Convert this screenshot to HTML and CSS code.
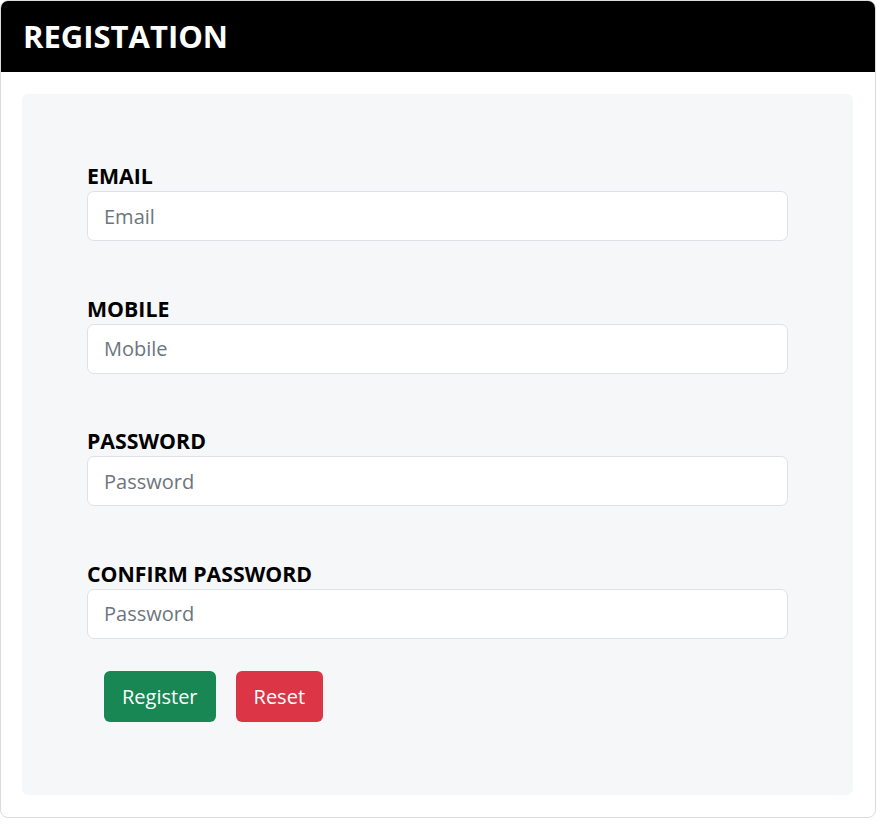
FILE: index.html
```
<!DOCTYPE html>
<html>
<head>
<meta charset="utf-8">
<link rel="stylesheet" href="styles.css">
</head>
<body>
<div class="card">
  <div class="card-header">REGISTATION</div>
  <div class="card-body">
    <form class="panel">
      <div class="field">
        <label class="label">EMAIL</label>
        <input class="input" type="text" placeholder="Email">
      </div>
      <div class="field">
        <label class="label">MOBILE</label>
        <input class="input" type="text" placeholder="Mobile">
      </div>
      <div class="field">
        <label class="label">PASSWORD</label>
        <input class="input" type="password" placeholder="Password">
      </div>
      <div class="field">
        <label class="label">CONFIRM PASSWORD</label>
        <input class="input" type="password" placeholder="Password">
      </div>
      <div class="actions">
        <button type="button" class="btn btn-success">Register</button>
        <button type="button" class="btn btn-danger">Reset</button>
      </div>
    </form>
  </div>
</div>
</body>
</html>
```
FILE: styles.css
```
* { box-sizing: border-box; }
html, body { margin: 0; padding: 0; background: #fff; }
body { font-family: "Open Sans", "Noto Sans", sans-serif; color: #000; }

.card {
  width: 876px;
  height: 818px;
  border: 1px solid #d9dcdf;
  border-radius: 8px;
  display: flex;
  flex-direction: column;
  overflow: hidden;
}
.card-header {
  height: 71px;
  background: #000;
  color: #fff;
  font-weight: 700;
  font-size: 31px;
  line-height: 71px;
  padding-left: 22px;
  flex: none;
}
.card-body {
  flex: 1;
  padding: 22px 22px 22px 21px;
  display: flex;
}
.panel {
  flex: 1;
  background: #f6f7f9;
  border-radius: 6px;
  padding: 67px 65px 0 65px;
  display: flex;
  flex-direction: column;
  margin: 0;
}
.field {
  display: flex;
  flex-direction: column;
  margin-bottom: 52.5px;
}
.field:nth-child(4) { margin-bottom: 32px; }
.label {
  font-size: 21.3px;
  font-weight: 700;
  line-height: 30px;
}
.input {
  height: 50px;
  border: 1px solid #dee2e6;
  border-radius: 7px;
  background: #fff;
  padding: 0 16px;
  font-family: inherit;
  font-size: 20px;
  color: #212529;
  outline: none;
}
.input::placeholder { color: #6c757d; opacity: 1; }
.actions {
  display: flex;
  gap: 20px;
  padding-left: 17px;
}
.btn {
  height: 51px;
  border: none;
  border-radius: 6px;
  padding: 0 18px;
  font-family: inherit;
  font-size: 20px;
  color: #fff;
  cursor: pointer;
}
.btn-success { background: #198754; }
.btn-danger { background: #dc3545; }
```
